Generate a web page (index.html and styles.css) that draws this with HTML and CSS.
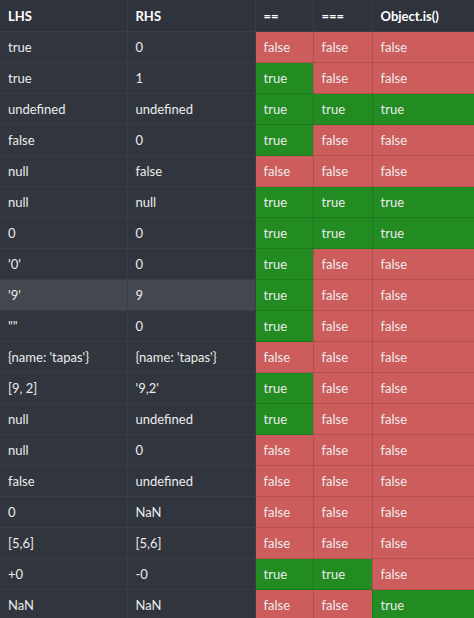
FILE: index.html
```html
<!DOCTYPE html>
<html lang="en">
<head>
    <meta charset="UTF-8">
    <meta name="viewport" content="width=device-width, initial-scale=1.0">
    <title>Equality comparison</title>
    <link rel="stylesheet" href="styles.css">
</head>
<body>
    <table class="compare">
        <colgroup>
            <col class="col-lhs">
            <col class="col-rhs">
            <col class="col-eq">
            <col class="col-strict">
            <col class="col-is">
        </colgroup>
        <thead>
            <tr>
                <th>LHS</th>
                <th>RHS</th>
                <th>==</th>
                <th>===</th>
                <th>Object.is()</th>
            </tr>
        </thead>
        <tbody>
            <tr><td>true</td><td>0</td><td class="no">false</td><td class="no">false</td><td class="no">false</td></tr>
            <tr><td>true</td><td>1</td><td class="yes">true</td><td class="no">false</td><td class="no">false</td></tr>
            <tr><td>undefined</td><td>undefined</td><td class="yes">true</td><td class="yes">true</td><td class="yes">true</td></tr>
            <tr><td>false</td><td>0</td><td class="yes">true</td><td class="no">false</td><td class="no">false</td></tr>
            <tr><td>null</td><td>false</td><td class="no">false</td><td class="no">false</td><td class="no">false</td></tr>
            <tr><td>null</td><td>null</td><td class="yes">true</td><td class="yes">true</td><td class="yes">true</td></tr>
            <tr><td>0</td><td>0</td><td class="yes">true</td><td class="yes">true</td><td class="yes">true</td></tr>
            <tr><td>'0'</td><td>0</td><td class="yes">true</td><td class="no">false</td><td class="no">false</td></tr>
            <tr class="hover"><td>'9'</td><td>9</td><td class="yes">true</td><td class="no">false</td><td class="no">false</td></tr>
            <tr><td>""</td><td>0</td><td class="yes">true</td><td class="no">false</td><td class="no">false</td></tr>
            <tr><td>{name: 'tapas'}</td><td>{name: 'tapas'}</td><td class="no">false</td><td class="no">false</td><td class="no">false</td></tr>
            <tr><td>[9, 2]</td><td>'9,2'</td><td class="yes">true</td><td class="no">false</td><td class="no">false</td></tr>
            <tr><td>null</td><td>undefined</td><td class="yes">true</td><td class="no">false</td><td class="no">false</td></tr>
            <tr><td>null</td><td>0</td><td class="no">false</td><td class="no">false</td><td class="no">false</td></tr>
            <tr><td>false</td><td>undefined</td><td class="no">false</td><td class="no">false</td><td class="no">false</td></tr>
            <tr><td>0</td><td>NaN</td><td class="no">false</td><td class="no">false</td><td class="no">false</td></tr>
            <tr><td>[5,6]</td><td>[5,6]</td><td class="no">false</td><td class="no">false</td><td class="no">false</td></tr>
            <tr><td>+0</td><td>-0</td><td class="yes">true</td><td class="yes">true</td><td class="no">false</td></tr>
            <tr><td>NaN</td><td>NaN</td><td class="no">false</td><td class="no">false</td><td class="yes">true</td></tr>
        </tbody>
    </table>
</body>
</html>
```

FILE: styles.css
```css
html, body {
    margin: 0;
    padding: 0;
}
body {
    font-family: Lato, "Noto Sans", Arial, sans-serif;
    background-color: #31353d;
    color: #ececec;
    font-size: 13px;
}
.compare {
    width: 474px;
    border-collapse: collapse;
    table-layout: fixed;
}
.col-lhs {
    width: 127px;
}
.col-rhs {
    width: 128px;
}
.col-eq {
    width: 58px;
}
.col-strict {
    width: 59px;
}
.col-is {
    width: 102px;
}
th, td {
    text-align: left;
    padding: 5px 8px;
    line-height: 20px;
    border: 1px solid #393d45;
    white-space: nowrap;
}
th {
    height: 20px;
    padding: 6px 8px 5px;
    font-weight: 700;
    color: #ffffff;
    background-color: #2f333b;
}
thead tr th {
    border-top: none;
}
tr th:first-child, tr td:first-child {
    border-left: none;
}
tr th:last-child, tr td:last-child {
    border-right: none;
}
.hover td {
    background-color: #43474f;
}
td.yes {
    background-color: #228b22;
    border-color: rgba(0, 0, 0, 0.12);
}
td.no {
    background-color: #cd5c5c;
    border-color: rgba(0, 0, 0, 0.12);
}
```
